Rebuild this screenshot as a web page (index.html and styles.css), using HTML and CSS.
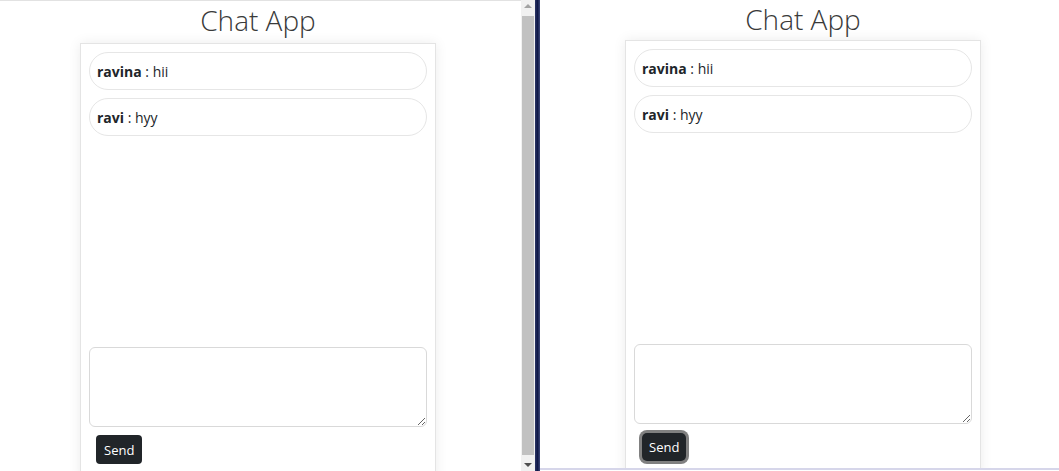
FILE: index.html
```html
<!DOCTYPE html>
<html>
<head>
<meta charset="utf-8">
<link rel="stylesheet" href="styles.css">
</head>
<body>
<div class="pane pane-left">
  <h1 class="title">Chat App</h1>
  <div class="card">
    <div class="messages">
      <div class="msg"><b>ravina</b>&nbsp;: hii</div>
      <div class="msg"><b>ravi</b>&nbsp;: hyy</div>
    </div>
    <textarea class="input"></textarea>
    <button class="send">Send</button>
  </div>
</div>
<div class="scrollbar">
  <div class="arrow arrow-up"></div>
  <div class="thumb"></div>
  <div class="arrow arrow-down"></div>
</div>
<div class="divider"></div>
<div class="pane pane-right">
  <h1 class="title">Chat App</h1>
  <div class="card">
    <div class="messages">
      <div class="msg"><b>ravina</b>&nbsp;: hii</div>
      <div class="msg"><b>ravi</b>&nbsp;: hyy</div>
    </div>
    <textarea class="input"></textarea>
    <button class="send send-focus">Send</button>
  </div>
</div>
</body>
</html>
```

FILE: styles.css
```css
* { box-sizing: border-box; }
html, body { margin: 0; padding: 0; }
body {
  display: flex;
  height: 471px;
  overflow: hidden;
  background: #fff;
  font-family: "Open Sans", "Noto Sans", sans-serif;
  color: #212529;
}
.pane {
  display: flex;
  flex-direction: column;
  align-items: center;
  overflow: hidden;
}
.pane-left {
  width: 521px;
  border-top: 1px solid #e2e2e2;
  padding: 0 5px 0 0;
}
.pane-right {
  flex: 1;
  height: 470px;
  padding: 0 0 0 7px;
  border-bottom: 2px solid #d6d6ea;
}
.title {
  margin: 0;
  height: 38px;
  line-height: 38px;
  font-size: 28px;
  font-weight: 300;
  color: #3a3a3a;
}
.card {
  flex: none;
  width: 356px;
  height: 440px;
  margin-top: 4px;
  border: 1px solid #e4e4e4;
  box-shadow: 0 0 12px rgba(0, 0, 0, 0.08);
  padding: 8px;
  background: #fff;
}
.pane-right .card { margin-top: 2px; }
.messages {
  height: 287px;
  display: flex;
  flex-direction: column;
  gap: 8px;
}
.msg {
  height: 38px;
  border: 1px solid #e6e6e6;
  border-radius: 19px;
  padding: 0 7px;
  display: flex;
  align-items: center;
  font-size: 14px;
}
.msg b { font-weight: 700; }
.input {
  display: block;
  width: 100%;
  height: 80px;
  margin-top: 8px;
  border: 1px solid #d9d9d9;
  border-radius: 6px;
  resize: vertical;
  font-family: inherit;
}
.send {
  display: block;
  margin: 8px 0 0 7px;
  height: 29px;
  padding: 0 8px;
  border: none;
  border-radius: 4px;
  background: #212529;
  color: #fff;
  font-family: inherit;
  font-size: 13px;
}
.send-focus {
  margin: 9px 0 0 8px;
  height: 28px;
  padding: 0 7px;
  border-radius: 5px;
  box-shadow: 0 0 0 3px #808080;
}
.scrollbar {
  width: 14px;
  flex: none;
  background: #f1f1f1;
  display: flex;
  flex-direction: column;
  align-items: center;
}
.thumb {
  flex: 1;
  width: 12px;
  background: #c1c1c1;
  margin: 4px 0;
}
.arrow {
  width: 0;
  height: 0;
  border-left: 4px solid transparent;
  border-right: 4px solid transparent;
  margin: 4px 0;
}
.arrow-up { border-bottom: 4px solid #a3a3a3; }
.arrow-down { border-top: 4px solid #505050; }
.divider {
  width: 5px;
  flex: none;
  background: linear-gradient(90deg, #2b3566, #0f1848 50%, #3d4778);
}
```
